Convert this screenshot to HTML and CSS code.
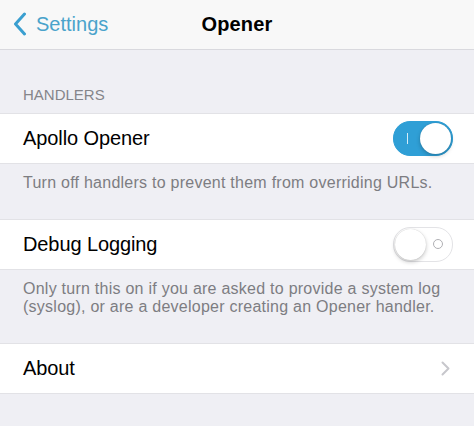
FILE: index.html
```html
<!DOCTYPE html>
<html lang="en">
<head>
    <meta charset="UTF-8">
    <meta name="viewport" content="width=device-width, initial-scale=1.0">
    <title>Opener</title>
    <link rel="stylesheet" href="styles.css">
</head>
<body>
    <div class="navbar">
        <a class="back" href="#">
            <svg class="back-icon" width="14" height="24" viewBox="0 0 14 24"><path d="M11.5 2 L2.5 12 L11.5 22" fill="none" stroke="#3a9fd0" stroke-width="3" stroke-linecap="round" stroke-linejoin="round"/></svg>
            <span>Settings</span>
        </a>
        <div class="title">Opener</div>
    </div>

    <div class="section">
        <div class="section-header">HANDLERS</div>
        <div class="cell">
            <span class="cell-label">Apollo Opener</span>
            <div class="switch on"><span class="mark-on"></span><span class="knob"></span></div>
        </div>
        <div class="section-footer">Turn off handlers to prevent them from overriding URLs.</div>
    </div>

    <div class="section">
        <div class="cell">
            <span class="cell-label">Debug Logging</span>
            <div class="switch"><span class="knob"></span><span class="mark-off"></span></div>
        </div>
        <div class="section-footer">Only turn this on if you are asked to provide a system log (syslog), or are a developer creating an Opener handler.</div>
    </div>

    <div class="section">
        <div class="cell">
            <span class="cell-label">About</span>
            <svg class="disclosure" width="9" height="15" viewBox="0 0 9 15"><path d="M1.5 1.5 L7.5 7.5 L1.5 13.5" fill="none" stroke="#c7c7cc" stroke-width="2" stroke-linecap="round" stroke-linejoin="round"/></svg>
        </div>
    </div>
</body>
</html>
```

FILE: styles.css
```css
body{
    margin: 0;
    background: #efeff4;
    font-family: "Liberation Sans", "Noto Sans", sans-serif;
    color: #000;
    height: 426px;
    overflow: hidden;
}
.navbar{
    height: 49px;
    background: #f8f8f8;
    border-bottom: 1px solid #d9d9de;
    display: flex;
    align-items: center;
    justify-content: center;
    position: relative;
}
.back{
    position: absolute;
    left: 13px;
    top: 12px;
    display: flex;
    align-items: center;
    gap: 9px;
    color: #4aa3cb;
    text-decoration: none;
    font-size: 20px;
}
.title{
    font-size: 20px;
    font-weight: bold;
    letter-spacing: 0.2px;
}
.section{
    padding-top: 36px;
}
.section + .section{
    padding-top: 0;
}
.section-header{
    padding: 0 23px 9px;
    font-size: 15px;
    color: #85858a;
    line-height: 18px;
}
.cell{
    height: 49px;
    background: #fff;
    border-top: 1px solid #e2e2e6;
    border-bottom: 1px solid #e2e2e6;
    display: flex;
    align-items: center;
    justify-content: space-between;
    padding: 0 22px 0 23px;
}
.cell-label{
    font-size: 20px;
    letter-spacing: -0.1px;
}
.section-footer{
    padding: 10px 23px 27px;
    font-size: 16px;
    line-height: 18px;
    letter-spacing: 0.25px;
    color: #7d7d82;
}
.switch{
    width: 58px;
    height: 33px;
    border-radius: 17px;
    border: 1px solid #e3e3e6;
    background: #fff;
    display: flex;
    align-items: center;
    position: relative;
    margin-right: -1px;
}
.switch .knob{
    width: 31px;
    height: 31px;
    border-radius: 50%;
    background: #fff;
    box-shadow: 0 2px 4px rgba(0,0,0,0.22), 0 0 1px rgba(0,0,0,0.2);
    margin-left: 1px;
}
.switch.on{
    background: #2f9fd6;
    border-color: #2f9fd6;
    justify-content: flex-end;
}
.switch.on .knob{
    margin: 0 1px 0 0;
}
.mark-on{
    position: absolute;
    left: 13px;
    top: 11px;
    width: 1px;
    height: 11px;
    background: rgba(255,255,255,0.8);
}
.mark-off{
    position: absolute;
    right: 9px;
    top: 11px;
    width: 8px;
    height: 8px;
    border: 1.5px solid #b0b0b4;
    border-radius: 50%;
}
.disclosure{
    margin-right: 2px;
}
```
